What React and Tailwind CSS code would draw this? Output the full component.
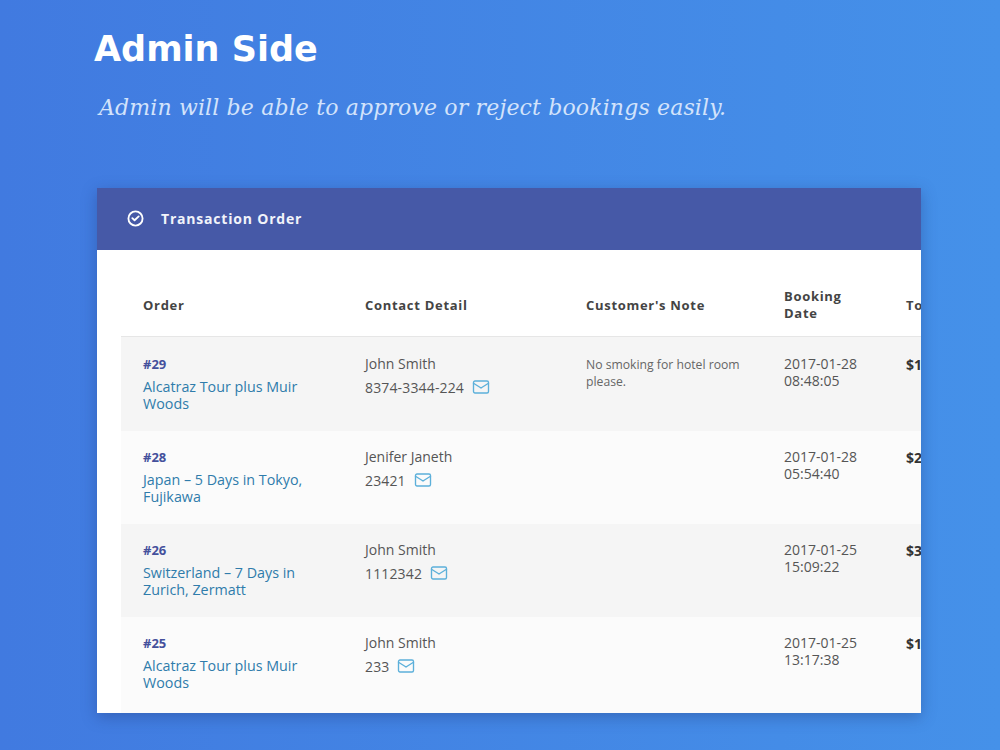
import { Mail } from 'lucide-react'

const orders = [
    { id: '#29', tour: ['Alcatraz Tour plus Muir', 'Woods'], name: 'John Smith', phone: '8374-3344-224', note: 'No smoking for hotel room please.', date: '2017-01-28', time: '08:48:05', total: '$1', h: 'h-[94px] pt-[18px]', bg: 'bg-[#f5f5f5]' },
    { id: '#28', tour: ['Japan – 5 Days in Tokyo,', 'Fujikawa'], name: 'Jenifer Janeth', phone: '23421', note: '', date: '2017-01-28', time: '05:54:40', total: '$2', h: 'h-[93px] pt-[17px]', bg: 'bg-[#fbfbfb]' },
    { id: '#26', tour: ['Switzerland – 7 Days in', 'Zurich, Zermatt'], name: 'John Smith', phone: '1112342', note: '', date: '2017-01-25', time: '15:09:22', total: '$3', h: 'h-[93px] pt-[17px]', bg: 'bg-[#f5f5f5]' },
    { id: '#25', tour: ['Alcatraz Tour plus Muir', 'Woods'], name: 'John Smith', phone: '233', note: '', date: '2017-01-25', time: '13:17:38', total: '$1', h: 'h-[96px] pt-[17px]', bg: 'bg-[#fbfbfb]' },
]

const cols = 'grid grid-cols-[222px_221px_198px_122px_100px] w-[863px] pl-[22px]'

const App = () => {
    return (
        <div className="h-[750px] w-[1000px] overflow-hidden bg-gradient-to-r from-[#417ae0] to-[#4591e9] pt-[28px] font-['Open_Sans',sans-serif]">
            <h1 className="ml-[94px] text-[35px] leading-[42px] font-bold text-white font-['DejaVu_Sans',sans-serif]">Admin Side</h1>
            <p className="ml-[99px] mt-[23px] text-[22px] leading-[30px] tracking-[0.15px] italic text-[#d3e3fb] font-['DejaVu_Serif',serif]">
                Admin will be able to approve or reject bookings easily.
            </p>

            <div className="ml-[97px] mt-[65px] w-[824px] h-[525px] overflow-hidden bg-white shadow-[0_4px_14px_rgba(30,50,110,0.35)]">
                <div className="flex h-[62px] items-center gap-[17px] bg-[#4659a7] pb-[2px] pl-[30px] text-white">
                    <svg className="h-[17px] w-[17px]" viewBox="0 0 24 24" fill="none" stroke="currentColor" strokeWidth="2.6" strokeLinecap="round" strokeLinejoin="round">
                        <circle cx="12" cy="12" r="10" />
                        <path d="M7.5 11.5l3.2 3 5.8-5.5" />
                    </svg>
                    <span className="text-[14px] font-bold tracking-[0.8px] text-[#f1f3fa]">Transaction Order</span>
                </div>

                <div className="ml-[24px]">
                    <div className={`${cols} h-[87px] items-center border-b border-[#e6e6e6] bg-white pt-[24px] text-[13px] leading-[17px] font-bold tracking-[0.7px] text-[#444]`}>
                        <div>Order</div>
                        <div>Contact Detail</div>
                        <div>Customer's Note</div>
                        <div>Booking<br />Date</div>
                        <div>Total</div>
                    </div>

                    {orders.map((o) => (
                        <div key={o.id} className={`${cols} ${o.h} ${o.bg} text-[14px] leading-[17px] text-[#555]`}>
                            <div className="pt-[1px]">
                                <div className="text-[13px] font-bold text-[#44509c]">{o.id}</div>
                                <div className="mt-[5px] text-[14.3px] text-[#2f7cab]">{o.tour[0]}<br />{o.tour[1]}</div>
                            </div>
                            <div>
                                <div>{o.name}</div>
                                <div className="mt-[6px] flex items-center gap-[8px] tracking-[0.15px]">
                                    {o.phone}
                                    <Mail className="h-[18px] w-[18px] text-[#5cb0da]" strokeWidth={1.8} />
                                </div>
                            </div>
                            <div className="w-[178px] pt-[1px] text-[12.2px] text-[#666]">{o.note}</div>
                            <div>{o.date}<br />{o.time}</div>
                            <div className="pt-[1px] font-bold text-[#333]">{o.total}</div>
                        </div>
                    ))}
                </div>
            </div>
        </div>
    )
}

export default App
